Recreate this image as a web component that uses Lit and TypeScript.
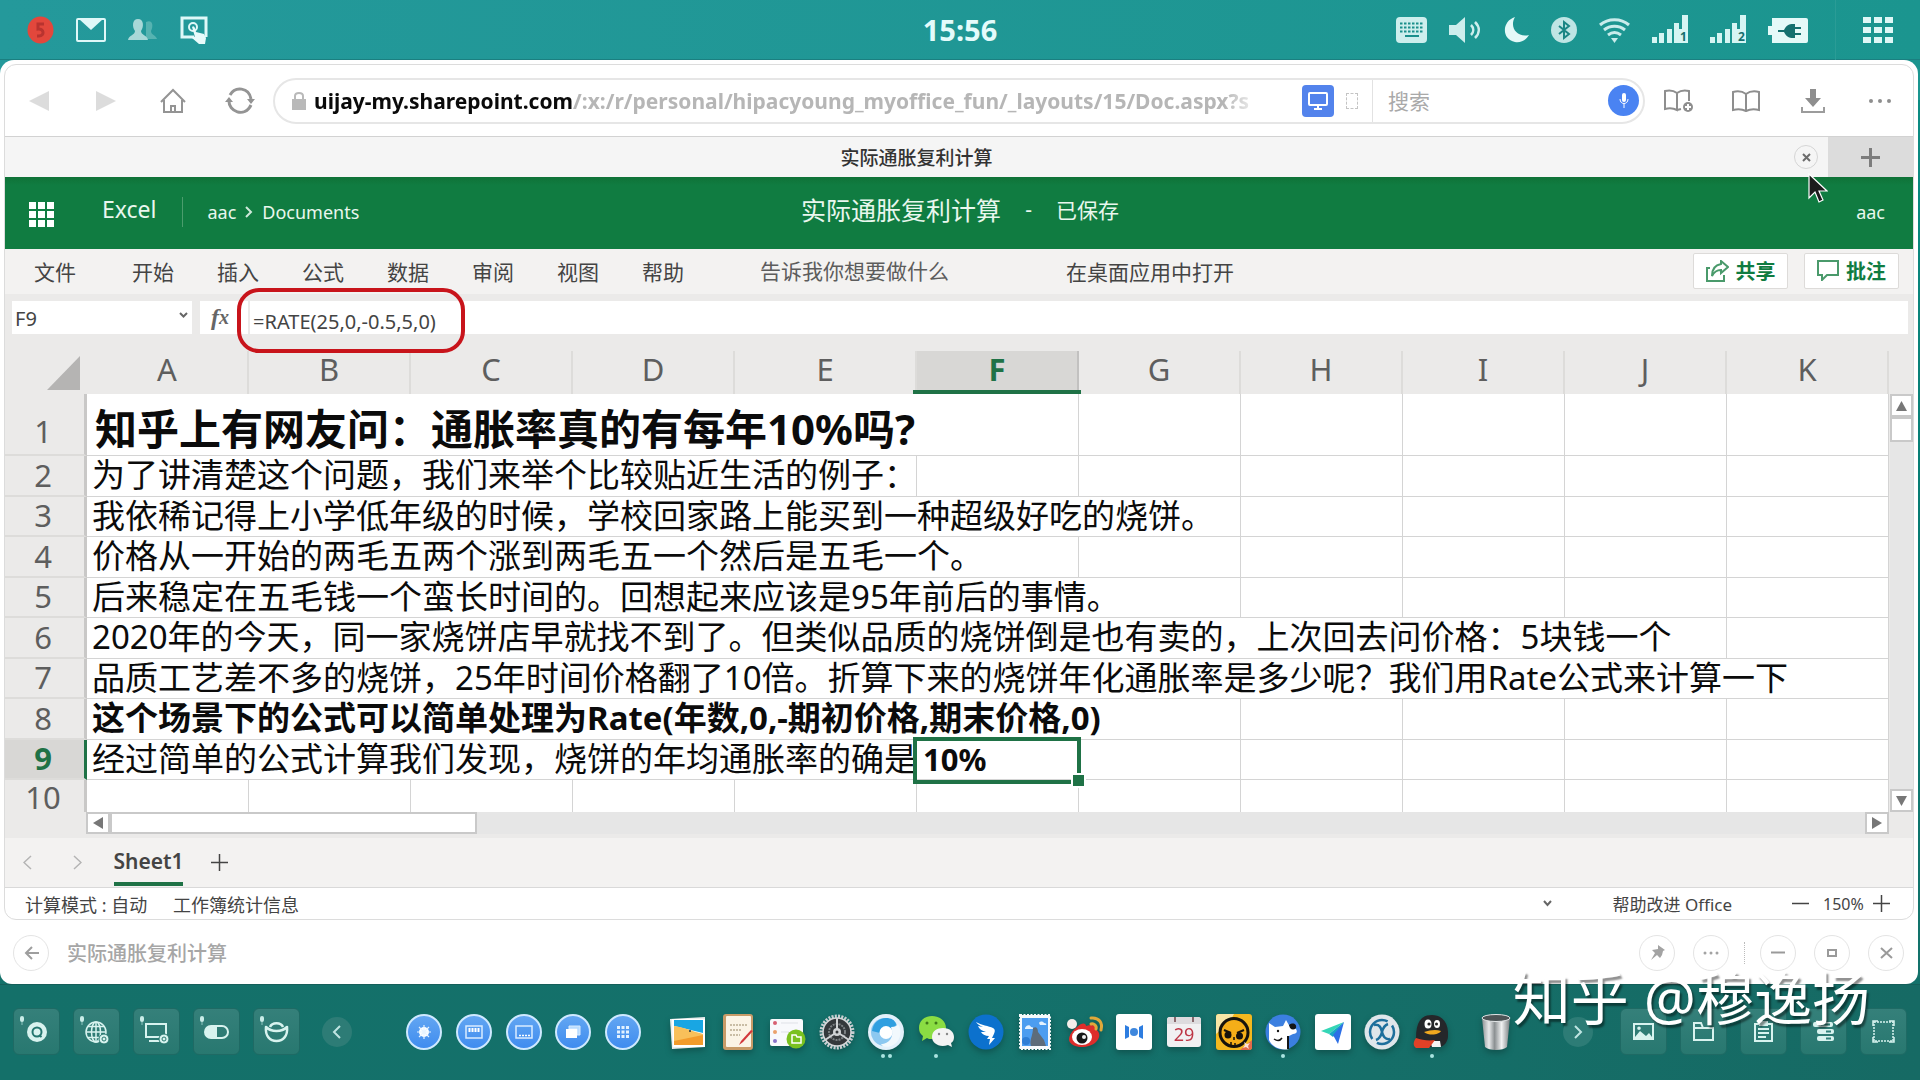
import { LitElement, html, css, svg, nothing } from "lit";
import { customElement } from "lit/decorators.js";

type Cell = { text: string; span: number; selected?: boolean };
type Row = { n: number; cls: string; cells: Cell[] };

const COLS = ["A", "B", "C", "D", "E", "F", "G", "H", "I", "J", "K"];
const blanks = (n: number): Cell[] => Array.from({ length: n }, () => ({ text: "", span: 1 }));
const line = (n: number, cls: string, text: string, span: number): Row => ({
  n,
  cls,
  cells: [{ text, span }, ...blanks(11 - span)],
});

const ROWS: Row[] = [
  line(1, "title", "知乎上有网友问：通胀率真的有每年10%吗?", 6),
  line(2, "tall", "为了讲清楚这个问题，我们来举个比较贴近生活的例子：", 5),
  line(3, "", "我依稀记得上小学低年级的时候，学校回家路上能买到一种超级好吃的烧饼。", 7),
  line(4, "tall", "价格从一开始的两毛五两个涨到两毛五一个然后是五毛一个。", 6),
  line(5, "", "后来稳定在五毛钱一个蛮长时间的。回想起来应该是95年前后的事情。", 7),
  line(6, "tall", "2020年的今天，同一家烧饼店早就找不到了。但类似品质的烧饼倒是也有卖的，上次回去问价格：5块钱一个", 10),
  line(7, "", "品质工艺差不多的烧饼，25年时间价格翻了10倍。折算下来的烧饼年化通胀率是多少呢？我们用Rate公式来计算一下", 11),
  line(8, "tall strong", "这个场景下的公式可以简单处理为Rate(年数,0,-期初价格,期末价格,0)", 7),
  {
    n: 9,
    cls: "active",
    cells: [
      { text: "经过简单的公式计算我们发现，烧饼的年均通胀率的确是", span: 5 },
      { text: "10%", span: 1, selected: true },
      ...blanks(5),
    ],
  },
  { n: 10, cls: "last", cells: blanks(11) },
];

const MENUS = ["开始", "插入", "公式", "数据", "审阅", "视图", "帮助"];

const signal = (n: string) => html`<svg width="36" height="30" viewBox="0 0 36 30" fill="#d6f5f3">
  <path d="M0 22h5v6H0zM7 18h5v10H7zM15 14h5v14h-5zM22 8h5v20h-5zM30 0h6v28h-9V14h3z" />
  <text x="28" y="26" font-size="12" font-weight="700" fill="#146f6d" font-family="Noto Sans">${n}</text>
</svg>`;

const mic = svg`<rect x="7" y="8" width="4" height="6" rx="2" fill="#c9ece8"/><path d="M9 14v3" fill="none" stroke="#8fc4bf"/>`;

const LEFT_TILES = [
  ["搜索", svg`<circle cx="24" cy="24" r="10" fill="#d8f3ef"/><circle cx="24" cy="24" r="4.500" fill="none" stroke="#23766f" stroke-width="2"/><path d="M26 27l2.500 2" stroke="#23766f" stroke-width="2"/>`],
  ["网络", svg`<g fill="none" stroke="#d8f3ef" stroke-width="1.500"><circle cx="23" cy="24" r="10"/><ellipse cx="23" cy="24" rx="4.500" ry="10"/><path d="M13 24h20M14.500 18.500h17M14.500 29.500h17M23 14v20"/></g><circle cx="31" cy="31" r="5" fill="#d8f3ef" stroke="#28786f"/><circle cx="31" cy="31" r="2" fill="none" stroke="#28786f"/>`],
  ["屏幕", svg`<g fill="none" stroke="#d8f3ef" stroke-width="2"><path d="M28 29H13V16h20v12M16 33h12"/></g><circle cx="31" cy="31" r="5" fill="#d8f3ef" stroke="#28786f"/><circle cx="31" cy="31" r="2" fill="none" stroke="#28786f"/>`],
  ["开关", svg`<rect x="12" y="18" width="23" height="12" rx="6" fill="none" stroke="#d8f3ef" stroke-width="2"/><path d="M24 18h-6a6 6 0 0 0 0 12h6z" fill="#d8f3ef"/>`],
  ["助手", svg`<path d="M13 19c3 3 6 4 10.500 4s7.500-1 10.500-4c1 9-4 14-10.500 14S12 28 13 19z" fill="none" stroke="#d8f3ef" stroke-width="2.500" stroke-linejoin="round"/><path d="M17 19c2-5 11-5 13 0" fill="none" stroke="#d8f3ef" stroke-width="2.500"/>`],
] as const;

const RIGHT_TILES = [
  ["图片", svg`<path fill-rule="evenodd" d="M13 15h21v17H13zM15 17v12l5-6 6 5 3-3 3 4V17zM19 18.500a1.800 1.800 0 1 1 0 3.600 1.800 1.800 0 0 1 0-3.600z" fill="#d8f3ef"/>`],
  ["文件夹", svg`<path d="M14 20h19v12H14zM14 20v-5h7l2 5" fill="none" stroke="#d8f3ef" stroke-width="2"/>`],
  ["剪贴板", svg`<path d="M15 16h17v17H15zM20 14h7v3h-7zM18 21h11M18 25h11M18 29h8" fill="none" stroke="#d8f3ef" stroke-width="2"/>`],
  ["任务", svg`<g fill="#d8f3ef"><rect x="13" y="14" width="20" height="5" rx="2"/><rect x="17" y="21" width="17" height="5" rx="2"/><rect x="17" y="28" width="17" height="5" rx="2"/></g><path d="M21 16.500h9M26 23.500h5M26 30.500h5" stroke="#2f807a" stroke-width="2"/>`],
  ["选区", svg`<rect x="14" y="14" width="19" height="19" fill="none" stroke="#d8f3ef" stroke-width="1.500" stroke-dasharray="2 1"/><path d="M13 18v-5h5M29 13h5v5M34 29v5h-5M18 34h-5v-5" fill="none" stroke="#d8f3ef" stroke-width="1.500"/>`],
] as const;

const TOOLS = [
  ["亮度", svg`<circle cx="16" cy="16" r="5" fill="#fff"/><path d="M16 9v14M9 16h14M11 11l10 10M21 11L11 21" stroke="#e6f3ff" stroke-width="1.200"/>`],
  ["键盘", svg`<rect x="8" y="10" width="16" height="12" fill="none" stroke="#d9ecff" stroke-width="1.500"/><path d="M11.500 12v4M14.500 12v4M17.500 12v4M20.500 12v4" stroke="#fff" stroke-width="2"/>`],
  ["任务栏", svg`<rect x="8" y="10" width="16" height="12" fill="none" stroke="#d9ecff" stroke-width="1.500"/><path d="M11 19.500h11" stroke="#fff" stroke-width="1.500" stroke-dasharray="2 1"/>`],
  ["窗口", svg`<path d="M12 10h11v9h-3v-6h-8z" fill="#b9dcff" stroke="#d9ecff"/><rect x="9" y="13" width="11" height="9" fill="#fff"/>`],
  ["应用", svg`<path d="M10 10h3v3h-3zM14.500 10h3v3h-3zM19 10h3v3h-3zM10 14.500h3v3h-3zM14.500 14.500h3v3h-3zM19 14.500h3v3h-3zM10 19h3v3h-3zM14.500 19h3v3h-3zM19 19h3v3h-3z" fill="#e3f2ff"/>`],
] as const;

const APPS: [string, unknown, number][] = [
  ["相册", svg`<path d="M0 5l35-2 0 30-33 2z" fill="#e9eeee"/><path d="M2 5h33v28H3z" fill="#fff"/><path d="M4 6h29v13L4 12z" fill="#19a6e3"/><path d="M4 12c9 1 18 5 29 8v11H4z" fill="#f8c05a"/><path d="M4 27l29-6v10H4z" fill="#f39b2b"/><circle cx="20" cy="17" r="1" fill="#234"/>`, 0],
  ["便签", svg`<rect x="3" y="0" width="30" height="36" rx="3" fill="#c89b68"/><rect x="6" y="2" width="25" height="31" rx="1" fill="#fbf4e6"/><path d="M10 11h17M10 16h11M10 21h10" stroke="#c9bda5" stroke-width="2" stroke-dasharray="2 1"/><path d="M33 17l-10 11-4 3 2-4 10-11z" fill="#d2383c"/>`, 0],
  ["待办", svg`<rect x="1" y="5" width="33" height="27" rx="2" fill="#f8f9fc"/><circle cx="6" cy="9" r="2" fill="#d76072"/><circle cx="6" cy="18" r="2" fill="#eba16b"/><circle cx="6" cy="27" r="2" fill="#8a73c9"/><path d="M12 9h17M12 18h8" stroke="#dfe1e7"/><circle cx="27" cy="25" r="9.500" fill="#7ac11f"/><path d="M23 21h4l1 2h4v6h-9z" fill="none" stroke="#fff" stroke-width="1.500"/>`, 0],
  ["设置", svg`<circle cx="18" cy="18" r="15.500" fill="none" stroke="#c9ced1" stroke-width="4" stroke-dasharray="2 1.200"/><circle cx="18" cy="18" r="14" fill="#34383b" stroke="#d4d7d9" stroke-width="1.500"/><circle cx="18" cy="18" r="8" fill="none" stroke="#7d8285" stroke-width="2" stroke-dasharray="2 1"/><path d="M18 18V4M18 18l12 8M18 18L6 26" stroke="#cfd2d4" stroke-width="2"/><circle cx="18" cy="18" r="4" fill="#cfd2d4"/><circle cx="18" cy="18" r="1.500" fill="#34383b"/>`, 0],
  ["浏览器", svg`<circle cx="18" cy="18" r="18" fill="#e3f1fb"/><circle cx="17" cy="18" r="14" fill="#8cc8f0"/><path d="M18 4c5 0 9 2 10 6 0 4-4 4-8 4l-8 5-8-2C5 9 11 4 18 4z" fill="#2f9fe0"/><path d="M23 13c4 0 6-1 7-3 5 8 2 19-7 22-6 2-9 0-10-2 8 0 14-7 10-17z" fill="#f2f9fd"/><circle cx="18" cy="18.500" r="6.500" fill="#fff"/>`, 2],
  ["微信", svg`<path d="M14 2c8 0 14 5 14 12s-6 11-14 11c-2 0-4 0-5-1l-5 3 1-5C2 20 1 17 1 14 1 7 6 2 14 2z" fill="#8bdd43"/><circle cx="9" cy="9" r="1.500" fill="#3f7a18"/><circle cx="18" cy="9" r="1.500" fill="#3f7a18"/><path d="M25 14c7 0 11 4 11 9 0 3-1 5-3 6l1 4-4-2c-9 3-16-2-16-8s5-9 11-9z" fill="#f3f3f3"/><circle cx="21" cy="20" r="1.200" fill="#888"/><circle cx="29" cy="20" r="1.200" fill="#888"/>`, 1],
  ["钉钉", svg`<circle cx="18" cy="18" r="17.500" fill="#0c71cd"/><path d="M8 8c5 3 13 4 17 6 3 2 2 4-1 10h3l-6 7 1-6h-3l2-3c-4 0-7-2-8-4l5 0c-4-1-7-3-8-6l5 1c-4-2-6-3-7-5z" fill="#fff"/>`, 0],
  ["邮票", svg`<rect x="3" y="1" width="30" height="34" fill="#f6fafc" stroke="#f6fafc" stroke-width="2" stroke-dasharray="2 1.500"/><rect x="5" y="4" width="26" height="28" fill="#4c9df0"/><path d="M8 14c1-3 5-4 6-1 2 0 3 1 2 2H8zM22 9c1-2 4-2 5 0 2 0 3 1 2 2h-6z" fill="#e5f3ff"/><path d="M16 14c3-2 5 0 5 4l6 8 2 6H14c-2-6 2-10 2-18z" fill="#5d6c7a"/><circle cx="9" cy="27" r="4" fill="#2e7ed6"/>`, 0],
  ["微博", svg`<path d="M10 13c5-5 9-4 9-1 6-2 11-1 9 3 5 2 6 8 1 13-7 7-25 7-27-2 0-5 3-9 8-13z" fill="#dd2d2b"/><ellipse cx="15" cy="23" rx="10" ry="8" fill="#fff"/><circle cx="15" cy="24" r="5.500" fill="#171717"/><circle cx="17" cy="23" r="2" fill="#eee"/><circle cx="5" cy="10" r="5" fill="#f5eeea"/><path d="M24 10c3-1 6 2 5 5M24 4c8-1 12 5 10 12" fill="none" stroke="#e0a83a" stroke-width="3" stroke-linecap="round"/>`, 0],
  ["会议", svg`<rect width="36" height="36" rx="3" fill="#fff"/><path d="M9 11l4 2v10l-4 2zM27 11l-4 2v10l4 2z" fill="#2d7de0"/><circle cx="18" cy="18" r="4" fill="#3e87dd"/>`, 0],
  ["日历", svg`<rect x="1" y="3" width="34" height="30" rx="3" fill="#f1f0f2"/><path d="M1 10V6a3 3 0 0 1 3-3h28a3 3 0 0 1 3 3v4z" fill="#dddbde"/><path d="M9 3v5M27 3v5" stroke="#88686c" stroke-width="2"/><text x="18" y="27" text-anchor="middle" font-size="18" font-family="Noto Sans" fill="#bd3545">29</text>`, 0],
  ["游戏", svg`<rect width="36" height="36" rx="3" fill="#f4b81f"/><path d="M0 20V3a3 3 0 0 1 3-3h15l-5 9z" fill="#f8e5a6"/><circle cx="18" cy="18.500" r="14" fill="#f5ae18" stroke="#16130d" stroke-width="3"/><path d="M8 16l7 3M28 16l-7 3" stroke="#16130d" stroke-width="2"/><circle cx="12" cy="21" r="3.500" fill="#16130d"/><circle cx="23.500" cy="22" r="3.500" fill="#16130d"/><path d="M18 23v3M15 28v3M19 29v2" stroke="#16130d" stroke-width="1.500"/><path d="M36 26v7a3 3 0 0 1-3 3h-9z" fill="#e2694b"/><path d="M28 28l3 2 3-1-2 3 1 3-3-2-3 1 2-3z" fill="#fbe0d6"/>`, 0],
  ["小狗", svg`<circle cx="18" cy="18" r="17.500" fill="#3b7fe0"/><path d="M4 9l6 4 8-1 3-6 4 7 6 2c2 3 0 5-3 5l-4 2v13c-8 2-17-2-20-9z" fill="#fff"/><path d="M24 11c4-3 8-1 7 3-2 2-4 2-6 0z" fill="#151515"/><path d="M24 22v13l-2 0 0-13z" fill="#151515"/><path d="M9 25c3 2 6 2 8-1" fill="none" stroke="#151515" stroke-width="1.500"/><circle cx="13" cy="17" r="1.200" fill="#151515"/>`, 1],
  ["飞机", svg`<rect width="36" height="36" rx="3" fill="#fff"/><path d="M29 8L6 17l8 3z" fill="#34d6b6"/><path d="M29 8L14 20l4 3z" fill="#17a7c6"/><path d="M29 8L18 21l5 9z" fill="#2c6fe6"/>`, 0],
  ["同步", svg`<circle cx="18" cy="18" r="17.500" fill="#dfe6ea"/><circle cx="18" cy="18" r="12" fill="none" stroke="#1d6f9c" stroke-width="2.500" stroke-dasharray="32 6" stroke-dashoffset="8"/><path d="M10 11c6-1 7 3 8 7s3 8 8 7M24 10c-3 1-5 4-6 8s-3 7-6 8" fill="none" stroke="#1d6f9c" stroke-width="2.500"/>`, 0],
  ["QQ", svg`<path d="M2 24c0-16 5-23 16-23s17 9 16 21c0 6-4 10-8 11H8z" fill="#25272a"/><path d="M16 27l10 0 1 6H18z" fill="#f4f4f4"/><path d="M2 24c6 2 12 3 19 2l-6 8H2c-4-3-2-7 0-10z" fill="#e14127"/><ellipse cx="14" cy="10" rx="3.500" ry="4.500" fill="#fff"/><ellipse cx="23" cy="10" rx="3" ry="4" fill="#fff"/><circle cx="15" cy="10" r="1.600" fill="#222"/><circle cx="22.500" cy="10" r="1.500" fill="#222"/><path d="M10 18c6-2 12-3 17-1-2 4-12 5-17 1z" fill="#f0a81f"/>`, 1],
];

@customElement("app-root")
export class AppRoot extends LitElement {
  static styles = css`
    :host {
      display: flex;
      flex-direction: column;
      position: relative;
      min-height: 100vh;
      box-sizing: border-box;
      overflow: hidden;
      font-family: "Noto Sans", "Noto Sans CJK SC", sans-serif;
      color: #444;
      background: linear-gradient(to right, #24999b, #1b958f) 0 0 / 100% 100px no-repeat,
        linear-gradient(#0d8f86, #08786f 60%, #14716a 92%);
    }
    * { box-sizing: border-box; }
    button, input { font: inherit; color: inherit; border: 0; background: none; padding: 0; margin: 0; outline: 0; min-width: 0; }
    a { color: inherit; text-decoration: none; }
    button { display: inline-flex; align-items: center; justify-content: center; flex: none; }
    svg { display: block; flex: none; }

    .topbar { height: 60px; display: grid; grid-template-columns: 1fr auto 1fr; align-items: center; padding: 0 27px; border-bottom: 1px solid #1b7f80; }
    .tray { display: flex; align-items: center; gap: 22px; }
    .tray.end { justify-content: flex-end; }
    .sep { width: 1px; height: 60px; background: #2a9c96; margin: 0 5px; }
    .clock { font-size: 29px; font-weight: 700; color: #e4fbfb; line-height: 58px; }

    .window { flex: 1; display: flex; flex-direction: column; background: #fff; border-radius: 14px 14px 12px 12px; margin-right: 2px; padding: 4px 4px 0; }
    .frame { display: flex; flex-direction: column; border: 1px solid #dcdcdc; border-radius: 12px; overflow: hidden; }

    .nav { height: 72px; display: flex; align-items: center; border-bottom: 1px solid #d2d2d2; }
    .nav > button { width: 67px; height: 44px; }
    .pill { flex: 1; min-width: 0; height: 46px; border: 2px solid #e6e6e6; border-radius: 23px; display: flex; align-items: center; padding: 0 4px 0 17px; }
    .url { flex: 1; min-width: 0; margin-left: 8px; overflow: hidden; white-space: nowrap; font-size: 21px; font-weight: 700; color: #b6b6b6; line-height: 40px; -webkit-mask-image: linear-gradient(to right, #000 96%, transparent); }
    .url b { color: #0a0a0a; font-weight: 700; }
    .mode { width: 32px; height: 32px; border-radius: 4px; background: #5383ec; margin-left: 40px; }
    .phone { flex: none; width: 12px; height: 16px; border: 1px dashed #c4c4c4; margin: 0 14px 0 12px; }
    .search { flex: none; width: 236px; height: 42px; border-left: 1px solid #e2e2e2; padding-left: 15px; font-size: 21px; }
    .search::placeholder { color: #a9a9a9; opacity: 1; }
    .mic { width: 31px; height: 31px; border-radius: 50%; background: #4a83f2; }

    .tabs { height: 40px; display: flex; background: #f5f5f5; font-size: 19px; font-weight: 500; color: #333; }
    .tab { flex: 1; display: flex; align-items: center; padding: 0 10px 0 34px; }
    .tab span { flex: 1; text-align: center; }
    .close { width: 24px; height: 24px; border: 1px solid #d5d5d5; border-radius: 50%; }
    .add { width: 85px; background: #dcdcdc; }

    .head { height: 72px; display: grid; grid-template-columns: 1fr auto 1fr; align-items: center; background: linear-gradient(#0f7237, #107c41 8px); color: #e9f7ee; font-size: 18px; padding: 0 28px 2px 24px; }
    .crumbs { display: flex; align-items: center; }
    .crumbs .waffle { margin-top: 4px; }
    .crumbs .brand { font-size: 23px; margin: 0 26px 6px 48px; }
    .crumbs i { width: 1px; height: 30px; background: #4b9d6d; margin-right: 24px; }
    .crumbs .gt { margin: 0 9px; }
    .doc { display: flex; align-items: center; font-size: 21px; margin-bottom: 6px; padding-left: 6px; }
    .doc strong { font-size: 25px; font-weight: 400; }
    .doc em { font-style: normal; margin: 0 24px; }
    .user { text-align: right; }

    .ribbon { height: 45px; display: flex; align-items: center; background: #f3f2f1; font-size: 21px; padding: 0 14px 2px 29px; }
    .menu { display: flex; gap: 43px; margin-left: 56px; }
    .tell { width: 260px; margin-left: 76px; }
    .tell::placeholder { color: #5c5c5c; opacity: 1; }
    .grow { flex: 1; }
    .desk { margin-left: 46px; }
    .act { height: 36px; width: 95px; margin-left: 16px; gap: 7px; border: 1px solid #dddbd9; border-radius: 2px; background: #fff; color: #107c41; font-size: 20px; font-weight: 700; }

    .formula { position: relative; height: 57px; display: flex; align-items: flex-start; background: #ebeae9; padding: 7px 5px 0 7px; font-size: 20px; }
    .namebox { width: 180px; height: 33px; background: #fff; display: flex; padding: 2px 4px 0 3px; }
    .namebox input { flex: 1; }
    .namebox svg { margin-top: 9px; }
    .fx { width: 48px; height: 33px; background: #fff; margin: 0 2px 0 8px; padding-right: 8px; font: italic 700 24px "Liberation Serif", serif; color: #666; }
    .fx small { font-size: 20px; }
    .fin { flex: 1; height: 33px; background: #fff; padding: 7px 0 0 3px; }
    .ring { position: absolute; left: 232px; top: -6px; width: 228px; height: 65px; border: 4px solid #c8141b; border-radius: 22px; pointer-events: none; z-index: 1; }

    .sheet { display: flex; background: #ebeae9; }
    table { flex: 1; width: 0; table-layout: fixed; border-collapse: separate; border-spacing: 0; background: #fff; }
    .c0 { width: 82px; }
    .c { width: 162px; }
    .cE { width: 182px; }
    th { padding: 0; font-weight: 400; font-size: 31px; color: #5e5e5e; background: #ebeae9; }
    thead tr { height: 43px; }
    thead th { border-right: 2px solid #dddcda; line-height: 34px; padding-bottom: 8px; height: 43px; }
    thead th.on { background: #d8d7d5; color: #1f7246; font-weight: 700; border-color: #c2c1c0; position: relative; }
    thead th.on::after { content: ""; position: absolute; left: -4px; right: -4px; bottom: 0; height: 4px; background: #1f7246; }
    thead .corner { border: 0; padding-bottom: 4px; }
    .corner svg { margin: 4px 0 0 42px; }
    tbody th { border-right: 3px solid #c9c8c7; border-bottom: 2px solid #dddcda; padding: 0 3px 2px 0; line-height: 36px; }
    td { padding: 0 0 2px 5px; border-right: 1px solid #d4d4d4; border-bottom: 1px solid #d4d4d4; white-space: nowrap; font-size: 33px; line-height: 36px; color: #0b0b0b; overflow: visible; }
    tbody tr { height: 40px; }
    tbody tr.tall { height: 41px; }
    tbody tr.title { height: 62px; }
    .title td { font-size: 42px; font-weight: 700; line-height: 52px; padding: 8px 0 0 8px; }
    .title th { padding-top: 16px; }
    .strong td { font-weight: 700; }
    .active th { background: #d8d7d5; color: #1f7246; font-weight: 700; border-right-color: #1f7246; }
    tbody tr.last { height: 32px; }
    .last td, .last th { border-bottom: 0; line-height: 30px; padding-bottom: 0; }
    .last th { padding-top: 2px; }
    .active td.sel { position: relative; font-size: 31px; font-weight: 700; padding-left: 6px; }
    .sel::before { content: ""; position: absolute; inset: -3px -3px -5px -4px; border: 4px solid #1f7246; }
    .sel::after { content: ""; position: absolute; right: -8px; bottom: -9px; width: 11px; height: 11px; border: 2px solid #fff; background: #1f7246; }

    .vs { width: 24px; display: flex; flex-direction: column; padding: 43px 0 0 1px; }
    .vs .track { flex: 1; background: #e6e6e6; }
    .sb { width: 23px; height: 23px; background: #fff; border: 2px solid #c9c9c9; }
    .thumb { width: 23px; height: 25px; background: #fff; border: 2px solid #c9c9c9; }
    .hs { height: 26px; display: flex; background: #ebeae9; padding: 0 24px 4px 81px; }
    .hs .thumb { width: 367px; height: 22px; }
    .hs .sb { width: 24px; height: 22px; }
    .hs .track { flex: 1; background: #e6e6e6; }

    .sheets { height: 50px; display: flex; align-items: center; background: #f3f2f1; border-bottom: 1px solid #d9d9d9; padding-left: 16px; }
    .sheets button { height: 49px; }
    .arrow { width: 12px; margin-right: 38px; }
    .arrow.next { margin-right: 31px; }
    .sheets .cur { width: 69px; font-size: 21px; font-weight: 600; border-bottom: 4px solid #1f7246; padding-bottom: 2px; padding-top: 2px; height: 47px; }
    .plus { margin-left: 28px; }

    .status { height: 31px; display: flex; align-items: center; font-size: 18px; padding: 0 23px 0 20px; white-space: nowrap; }
    .status .calc { width: 148px; }
    .help { font-size: 17px; margin: 0 60px 0 60px; }
    .pct { font-size: 16px; width: 39px; margin: 0 11px 0 14px; }

    .caption { height: 64px; display: flex; align-items: center; gap: 18px; padding: 1px 10px 0 9px; font-size: 20px; font-weight: 500; color: #a6a6a6; }
    .caption button { width: 36px; height: 36px; border: 1px solid #e4e4e4; border-radius: 50%; }
    .dots { height: 22px; border-left: 1px dotted #bbb; margin: 0 -3px; }

    .dock { height: 96px; display: flex; align-items: center; padding: 0 13px 2px; border-top: 1px solid #155f5a; background: linear-gradient(to right, #147069, #14716b 50%, #166a64); }
    .tiles { display: flex; gap: 13px; }
    .tile { width: 47px; height: 47px; border-radius: 6px; background: linear-gradient(#35807a, #287870); border: 1px solid #1f6a64; }
    .chev { width: 30px; height: 30px; border-radius: 50%; background: #2d7c76; }
    .chev.l { margin-left: 22px; }
    .chev.r { margin-left: 52px; }
    .tools { display: flex; justify-content: space-between; width: 235px; margin-left: 54px; }
    .tool { width: 36px; height: 36px; border-radius: 50%; background: linear-gradient(#63a6f2, #3f8cef); border: 2px solid #cfe9ff; }
    .apps { display: flex; justify-content: space-between; width: 780px; margin: 0 31px 0 29px; }
    .app { position: relative; }
    .app svg { overflow: visible; filter: drop-shadow(0 3px 3px rgba(0, 0, 0, 0.25)); }
    .run { position: absolute; left: 0; right: 0; top: 40px; display: flex; gap: 3px; justify-content: center; }
    .run i { width: 4px; height: 4px; border-radius: 50%; background: #a9e3e0; }

    .mark { position: absolute; right: 50px; bottom: 40px; font-size: 58px; line-height: 84px; color: #fff; white-space: nowrap; text-shadow: 2px 3px 2px rgba(0, 0, 0, 0.45); pointer-events: none; }
    .cursor { position: absolute; right: 92px; top: 173px; }
  `;

  private topBar() {
    return html`<header class="topbar">
      <div class="tray">
        <svg width="27" height="28" viewBox="0 0 27 28"><ellipse cx="13.500" cy="14" rx="13" ry="13.500" fill="#e2473c" /><path d="M17 8h-6v5c6-1 7 7 1 7h-2" fill="none" stroke="#b8332f" stroke-width="3" /></svg>
        <svg width="30" height="24" viewBox="0 0 30 24"><rect x="1" y="1" width="28" height="22" rx="1" fill="none" stroke="#dff8f8" stroke-width="2" /><path d="M3 1h24L15 12z" fill="#dff8f8" /></svg>
        <svg width="30" height="24" viewBox="0 0 30 24"><path d="M18 4c6-3 8 3 5 9 0 4 5 4 6 8H18z" fill="#56b3b1" /><path d="M10 1c6 0 6 8 3 12 0 4 6 4 7 9H0c1-5 7-5 7-9C4 9 4 1 10 1z" fill="#a8d8d8" /></svg>
        <svg width="28" height="30" viewBox="0 0 28 30"><path d="M14 22H2V3h24v19" fill="none" stroke="#dff8f8" stroke-width="3" /><circle cx="13" cy="12" r="4" fill="none" stroke="#dff8f8" stroke-width="2" /><path d="M12 12c2-2 3 0 4 5l8 2 2 4-1 6h-6l-7-6c0-2 2-2 3-1z" fill="#e8fbfb" /></svg>
      </div>
      <time class="clock">15:56</time>
      <div class="tray end">
        <svg width="31" height="26" viewBox="0 0 31 26"><rect width="31" height="26" rx="4" fill="#cdeeed" /><path d="M4 6.500h23M4 10.500h23M4 14.500h23" stroke="#1b8f8c" stroke-width="2" stroke-dasharray="2.500 1.500" /><path d="M9 19h14" stroke="#1b8f8c" stroke-width="2" /></svg>
        <svg width="33" height="26" viewBox="0 0 33 26"><path d="M0 8h7l9-8v26l-9-8H0z" fill="#cdeeed" /><path d="M22 8c3 3 3 7 0 10M26 5c5 5 5 11 0 16" fill="none" stroke="#cdeeed" stroke-width="2.500" /></svg>
        <svg width="25" height="26" viewBox="0 0 25 26"><path d="M11 0C-2 4-3 22 11 25c6 1 11-2 14-7C13 21 5 10 11 0z" fill="#e4f9f8" /></svg>
        <svg width="26" height="26" viewBox="0 0 26 26"><circle cx="13" cy="13" r="13" fill="#bfe5e4" /><path d="M8 9l10 8-5 4V5l5 4-10 8" fill="none" stroke="#1b8584" stroke-width="2" /></svg>
        <svg width="31" height="26" viewBox="0 0 31 26" fill="none" stroke="#c9eceb" stroke-width="3"><path d="M1 8c8-7 21-7 29 0M5 13c6-5 15-5 21 0M9 18c4-3 9-3 13 0" /><path d="M12 21h7l-3.500 5z" fill="#c9eceb" stroke="none" /></svg>
        ${signal("1")}${signal("2")}
        <svg width="40" height="25" viewBox="0 0 40 25"><path d="M4 0h34q2 0 2 2v21q0 2-2 2H4V17H0V8h4z" fill="#e4f9f8" /><path d="M10 12h6c3-6 6-6 11-6v3h6v2h-6v4h6v2h-6v3c-5 0-8 0-11-6h-6z" fill="#14706f" /></svg>
        <span class="sep"></span>
        <svg width="30" height="26" viewBox="0 0 30 26" fill="#dff7f6"><path d="M0 0h8v6H0zM11 0h8v6h-8zM22 0h8v6h-8zM0 10h8v6H0zM11 10h8v6h-8zM22 10h8v6h-8zM0 20h8v6H0zM11 20h8v6h-8zM22 20h8v6h-8z" /></svg>
      </div>
    </header>`;
  }

  private nav() {
    return html`<nav class="nav">
      <button aria-label="后退"><svg width="20" height="20" viewBox="0 0 20 20"><path d="M0 10L20 0v20z" fill="#dcdcdc" /></svg></button>
      <button aria-label="前进"><svg width="20" height="20" viewBox="0 0 20 20"><path d="M20 10L0 0v20z" fill="#dcdcdc" /></svg></button>
      <button aria-label="主页"><svg width="26" height="26" viewBox="0 0 26 26" fill="none" stroke="#949494" stroke-width="2"><path d="M1 14L13 2l12 12M4 12v12h18V12" /><path d="M11 24v-6h4v6" /></svg></button>
      <button aria-label="刷新"><svg width="30" height="28" viewBox="0 0 30 28" fill="none" stroke="#949494" stroke-width="3"><path d="M5 8C10-1 24 0 26 12M4 13c-1 12 16 18 22 5" /><path d="M22 12h8l-4 5zM0 15h8l-4-5z" fill="#949494" stroke="none" /></svg></button>
      <div class="pill">
        <svg width="14" height="18" viewBox="0 0 14 18"><path d="M0 7h14v11H0z" fill="#b9b9b9" /><path d="M3 8V4c0-4 8-4 8 0v4" fill="none" stroke="#b9b9b9" stroke-width="2" /></svg>
        <div class="url"><b>uijay-my.sharepoint.com</b>/:x:/r/personal/hipacyoung_myoffice_fun/_layouts/15/Doc.aspx?s</div>
        <button class="mode" aria-label="桌面版"><svg width="20" height="18" viewBox="0 0 20 18" fill="none" stroke="#fff" stroke-width="2"><rect x="1" y="1" width="18" height="12" rx="1" /><path d="M10 13v4M6 17h8" /></svg></button>
        <span class="phone"></span>
        <input class="search" type="text" aria-label="搜索" placeholder="搜索" />
        <button class="mic" aria-label="语音"><svg width="10" height="15" viewBox="0 0 10 15" fill="none" stroke="#fff"><rect x="3" y="0" width="4" height="9" rx="2" fill="#fff" stroke="none" /><path d="M1 6c0 6 8 6 8 0M5 11v4" /></svg></button>
      </div>
      <button aria-label="添加书签"><svg width="30" height="24" viewBox="0 0 30 24" fill="none" stroke="#8e8e8e" stroke-width="2"><path d="M13 4C9 1 5 1 1 2v18c4-1 8-1 12 1V4c4-3 8-3 12-2v10M13 21l4-1" /><circle cx="24" cy="18" r="5" fill="#8e8e8e" stroke="none" /><path d="M24 15v6M21 18h6" stroke="#fff" /></svg></button>
      <button aria-label="书签"><svg width="28" height="22" viewBox="0 0 28 22" fill="none" stroke="#8e8e8e" stroke-width="2"><path d="M14 4C10 1 5 1 1 2v18c4-1 9-1 13 1 4-2 9-2 13-1V2c-4-1-9-1-13 2zv17" /></svg></button>
      <button aria-label="下载"><svg width="24" height="24" viewBox="0 0 24 24"><path d="M9 0h6v9h5l-8 9-8-9h5z" fill="#8e8e8e" /><path d="M1 18v5h22v-5" fill="none" stroke="#9c9c9c" stroke-width="2" /></svg></button>
      <button aria-label="更多"><svg width="24" height="6" viewBox="0 0 24 6" fill="#8e8e8e"><circle cx="3" cy="3" r="2" /><circle cx="12" cy="3" r="2" /><circle cx="21" cy="3" r="2" /></svg></button>
    </nav>`;
  }

  private grid() {
    return html`<div class="sheet">
        <table>
          <colgroup>
            <col class="c0" />
            ${COLS.map((c) => (c === "K" ? html`<col />` : html`<col class=${c === "E" ? "cE" : "c"} />`))}
          </colgroup>
          <thead>
            <tr>
              <th class="corner"><svg width="33" height="34" viewBox="0 0 33 34"><path d="M33 0v34H0z" fill="#b5b4b3" /></svg></th>
              ${COLS.map((c) => html`<th scope="col" class=${c === "F" ? "on" : ""}>${c}</th>`)}
            </tr>
          </thead>
          <tbody>
            ${ROWS.map(
              (r) => html`<tr class=${r.cls}>
                <th scope="row">${r.n}</th>
                ${r.cells.map((c) => html`<td class=${c.selected ? "sel" : ""} colspan=${c.span}>${c.text}</td>`)}
              </tr>`
            )}
          </tbody>
        </table>
        <div class="vs">
          <button class="sb" aria-label="向上滚动"><svg width="11" height="10" viewBox="0 0 11 10"><path d="M5.500 0L11 10H0z" fill="#777" /></svg></button>
          <div class="thumb"></div>
          <div class="track"></div>
          <button class="sb" aria-label="向下滚动"><svg width="11" height="10" viewBox="0 0 11 10"><path d="M5.500 10L11 0H0z" fill="#777" /></svg></button>
        </div>
      </div>
      <div class="hs">
        <button class="sb" aria-label="向左滚动"><svg width="10" height="12" viewBox="0 0 10 12"><path d="M0 6l10-6v12z" fill="#777" /></svg></button>
        <div class="thumb"></div>
        <div class="track"></div>
        <button class="sb" aria-label="向右滚动"><svg width="10" height="12" viewBox="0 0 10 12"><path d="M10 6L0 0v12z" fill="#777" /></svg></button>
      </div>`;
  }

  private tile(label: string, art: unknown, voice: boolean) {
    return html`<button class="tile" aria-label=${label}><svg width="45" height="45" viewBox="1 1 45 45">${voice ? mic : nothing}${art}</svg></button>`;
  }

  private dock() {
    return html`<footer class="dock">
      <div class="tiles">${LEFT_TILES.map(([l, a]) => this.tile(l, a, true))}</div>
      <button class="chev l" aria-label="收起"><svg width="10" height="14" viewBox="0 0 10 14"><path d="M8 1L2 7l6 6" fill="none" stroke="#bfe5e2" stroke-width="2" /></svg></button>
      <div class="tools">
        ${TOOLS.map(([l, a]) => html`<button class="tool" aria-label=${l}><svg width="32" height="32" viewBox="0 0 32 32">${a}</svg></button>`)}
      </div>
      <div class="apps">
        ${APPS.map(
          ([l, a, n]) => html`<button class="app" aria-label=${l}>
            <svg width="36" height="36" viewBox="0 0 36 36">${a}</svg>
            ${n ? html`<span class="run">${Array.from({ length: n }, () => html`<i></i>`)}</span>` : nothing}
          </button>`
        )}
      </div>
      <button class="app" aria-label="回收站">
        <svg width="30" height="36" viewBox="0 0 30 36">
          <defs><linearGradient id="steel"><stop offset="0" stop-color="#8d9294" /><stop offset=".25" stop-color="#e8eaeb" /><stop offset=".45" stop-color="#8b9092" /><stop offset=".7" stop-color="#f1f2f2" /><stop offset="1" stop-color="#777c7e" /></linearGradient></defs>
          <path d="M1 4h28l-3 29c-4 4-18 4-22 0z" fill="url(#steel)" /><ellipse cx="15" cy="4" rx="14" ry="3.500" fill="#4d5456" stroke="#e2e5e6" />
        </svg>
      </button>
      <button class="chev r" aria-label="展开"><svg width="10" height="14" viewBox="0 0 10 14"><path d="M2 1l6 6-6 6" fill="none" stroke="#bfe5e2" stroke-width="2" /></svg></button>
      <span class="grow"></span>
      <div class="tiles">${RIGHT_TILES.map(([l, a]) => this.tile(l, a, false))}</div>
    </footer>`;
  }

  render() {
    return html`${this.topBar()}
      <main class="window">
        <div class="frame">
          ${this.nav()}
          <div class="tabs">
            <div class="tab">
              <span>实际通胀复利计算</span>
              <button class="close" aria-label="关闭标签页"><svg width="9" height="9" viewBox="0 0 9 9"><path d="M1 1l7 7M8 1L1 8" stroke="#6c6c6c" stroke-width="2" /></svg></button>
            </div>
            <button class="add" aria-label="新标签页"><svg width="19" height="19" viewBox="0 0 19 19"><path d="M9.500 0v19M0 9.500h19" stroke="#7d7d7d" stroke-width="3" /></svg></button>
          </div>
          <div class="head">
            <div class="crumbs">
              <svg class="waffle" width="25" height="25" viewBox="0 0 25 25" fill="#fff"><path d="M0 0h7v7H0zM9 0h7v7H9zM18 0h7v7h-7zM0 9h7v7H0zM9 9h7v7H9zM18 9h7v7h-7zM0 18h7v7H0zM9 18h7v7H9zM18 18h7v7h-7z" /></svg>
              <a class="brand" href="#excel">Excel</a><i></i>
              <a href="#aac">aac</a>
              <svg class="gt" width="8" height="12" viewBox="0 0 8 12"><path d="M1 1l5 5-5 5" fill="none" stroke="#cfe9da" stroke-width="2" /></svg>
              <a href="#documents">Documents</a>
            </div>
            <div class="doc"><strong>实际通胀复利计算</strong><em>-</em><span>已保存</span></div>
            <div class="user">aac</div>
          </div>
          <div class="ribbon">
            <button>文件</button>
            <div class="menu">${MENUS.map((m) => html`<button>${m}</button>`)}</div>
            <input class="tell" type="text" aria-label="告诉我你想要做什么" placeholder="告诉我你想要做什么" />
            <button class="desk">在桌面应用中打开</button>
            <span class="grow"></span>
            <button class="act"><svg width="23" height="22" viewBox="0 0 23 22" fill="none" stroke="#4a9a6b" stroke-width="2"><path d="M4 8H1v13h17v-6" /><path d="M15 1l7 6-7 6v-3c-4 0-7 2-9 6 0-7 3-11 9-12z" /></svg>共享</button>
            <button class="act"><svg width="22" height="21" viewBox="0 0 22 21" fill="none" stroke="#4a9a6b" stroke-width="2"><path d="M1 1h20v14H10l-5 5v-5H1z" /></svg>批注</button>
          </div>
          <div class="formula">
            <div class="namebox">
              <input type="text" aria-label="名称框" .value=${"F9"} />
              <svg width="9" height="6" viewBox="0 0 9 6"><path d="M1 1l3.500 3.500L8 1" fill="none" stroke="#666" stroke-width="2" /></svg>
            </div>
            <button class="fx" aria-label="插入函数">f<small>x</small></button>
            <input class="fin" type="text" aria-label="编辑栏" .value=${"=RATE(25,0,-0.5,5,0)"} />
            <div class="ring"></div>
          </div>
          ${this.grid()}
          <div class="sheets">
            <button class="arrow" aria-label="上一张"><svg width="9" height="15" viewBox="0 0 9 15"><path d="M8 1L1 7.500 8 14" fill="none" stroke="#b4b4b4" stroke-width="1.500" /></svg></button>
            <button class="arrow next" aria-label="下一张"><svg width="9" height="15" viewBox="0 0 9 15"><path d="M1 1l7 6.500L1 14" fill="none" stroke="#b4b4b4" stroke-width="1.500" /></svg></button>
            <button class="cur">Sheet1</button>
            <button class="plus" aria-label="新建工作表"><svg width="17" height="17" viewBox="0 0 17 17"><path d="M8.500 0v17M0 8.500h17" stroke="#444" stroke-width="1.500" /></svg></button>
          </div>
          <div class="status">
            <span class="calc">计算模式 : 自动</span>
            <span>工作簿统计信息</span>
            <span class="grow"></span>
            <svg width="9" height="7" viewBox="0 0 9 7"><path d="M1 1l3.500 4L8 1" fill="none" stroke="#666" stroke-width="2" /></svg>
            <a class="help" href="#help">帮助改进 Office</a>
            <button aria-label="缩小"><svg width="17" height="17" viewBox="0 0 17 17"><path d="M0 8.500h17" stroke="#444" stroke-width="1.500" /></svg></button>
            <span class="pct">150%</span>
            <button aria-label="放大"><svg width="17" height="17" viewBox="0 0 17 17"><path d="M8.500 0v17M0 8.500h17" stroke="#444" stroke-width="1.500" /></svg></button>
          </div>
        </div>
        <div class="caption">
          <button aria-label="返回"><svg width="15" height="14" viewBox="0 0 15 14"><path d="M15 7H2M8 1L2 7l6 6" fill="none" stroke="#9e9e9e" stroke-width="2" /></svg></button>
          <span>实际通胀复利计算</span>
          <span class="grow"></span>
          <button aria-label="固定"><svg width="15" height="15" viewBox="0 0 15 15"><path d="M8 0l7 5-2 1-1 4-2 3-3-3-6 5 4-7-3-3 6-1z" fill="#a3a3a3" /></svg></button>
          <button aria-label="选项"><svg width="16" height="4" viewBox="0 0 16 4" fill="#a3a3a3"><circle cx="2" cy="2" r="1.500" /><circle cx="8" cy="2" r="1.500" /><circle cx="14" cy="2" r="1.500" /></svg></button>
          <span class="dots"></span>
          <button aria-label="最小化"><svg width="14" height="3" viewBox="0 0 14 3"><path d="M0 1.500h14" stroke="#9a9a9a" stroke-width="2" /></svg></button>
          <button aria-label="最大化"><svg width="10" height="9" viewBox="0 0 10 9"><path d="M1 2h8v6H1z" fill="none" stroke="#9a9a9a" stroke-width="2" /><path d="M0 1h10v2H0z" fill="#9a9a9a" /></svg></button>
          <button aria-label="关闭"><svg width="13" height="12" viewBox="0 0 13 12"><path d="M1 1l11 10M12 1L1 11" stroke="#9a9a9a" stroke-width="2" /></svg></button>
        </div>
      </main>
      ${this.dock()}
      <div class="mark">知乎 @穆逸扬</div>
      <svg class="cursor" width="20" height="30" viewBox="0 0 20 30"><path d="M1 1v24l6-6 4 10 4-2-4-9h8z" fill="#1c1c1c" stroke="#fff" stroke-width="1.200" /></svg>`;
  }
}
